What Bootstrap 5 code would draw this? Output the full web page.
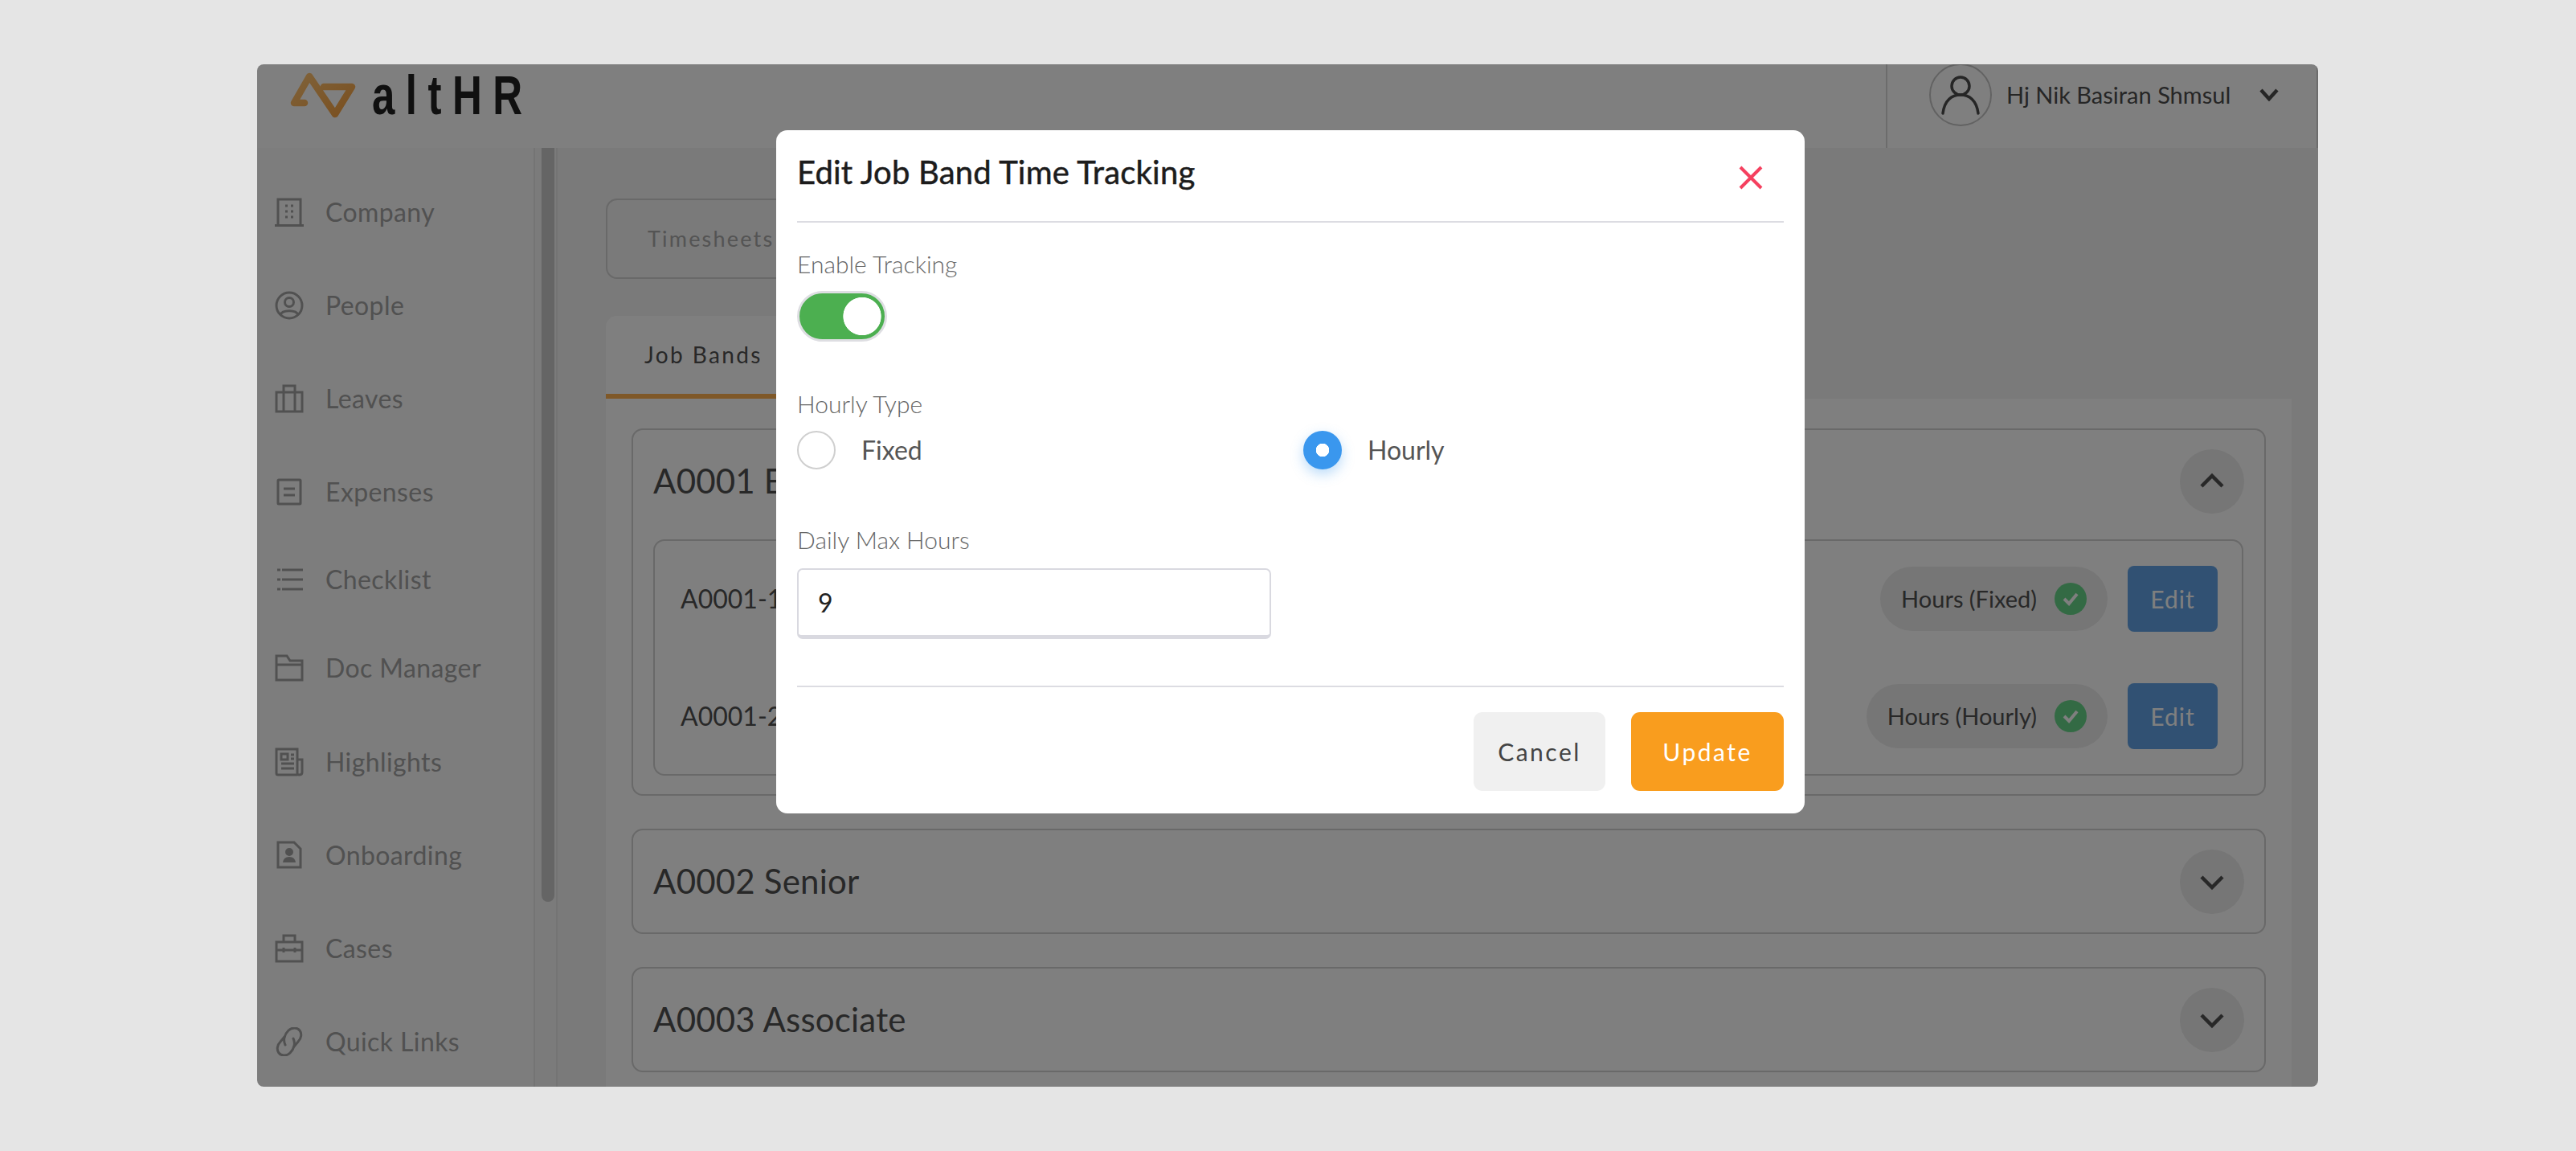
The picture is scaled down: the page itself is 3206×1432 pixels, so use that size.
<!DOCTYPE html>
<html lang="en">
<head>
  <meta charset="UTF-8">
  <title>altHR - Edit Job Band Time Tracking</title>
  <link href="https://cdn.jsdelivr.net/npm/bootstrap@5.3.0/dist/css/bootstrap.min.css" rel="stylesheet" />
  <style>
    body {
      margin: 0;
      background-color: #e5e5e5;
      font-family: Lato, "Noto Sans", sans-serif;
      color: #505050;
    }
    .app-window {
      position: relative;
      margin: 80px 0 0 320px;
      width: 2565px;
      height: 1272px;
      border-radius: 8px;
      overflow: hidden;
      background-color: #f4f4f4;
    }

    /* top bar */
    .top-bar {
      height: 104px;
      background-color: #ffffff;
      flex: none;
    }
    .logo-word {
      font-family: "Liberation Sans", sans-serif;
      font-weight: 700;
      font-size: 68px;
      line-height: 56px;
      letter-spacing: 18px;
      color: #202020;
      margin-left: 19px;
      transform: scaleX(.75);
      transform-origin: left;
    }
    .logo-box {
      padding: 10px 0 0 40px;
      align-self: flex-start;
    }
    .user-box {
      width: 538px;
      padding-left: 52px;
      border-left: 2px solid #d8d8d8;
      border-right: 2px solid #d8d8d8;
    }
    .avatar-ring {
      width: 78px;
      height: 78px;
      border: 2px solid #c4c4c4;
      border-radius: 50%;
      margin-top: -1px;
      flex: none;
    }
    .user-name {
      font-size: 29px;
      line-height: 36px;
      margin: 0 0 0 18px;
      color: #4c4c4c;
    }
    .user-top {
      height: 76px;
    }
    .user-caret {
      margin-left: 36px;
    }

    /* side menu */
    .side-menu {
      width: 346px;
      padding-top: 22px;
      background-color: #fbfbfb;
      border-right: 2px solid #e8e8e8;
      flex: none;
    }
    .side-item {
      display: flex;
      align-items: center;
      height: 116px;
      padding-left: 22px;
      color: #a2a2a2;
      font-size: 32px;
      letter-spacing: .4px;
      text-decoration: none;
    }
    .side-item svg {
      width: 36px;
      height: 36px;
      margin-right: 27px;
      flex: none;
    }
    .side-short { height: 102px; }
    .side-tall { height: 118px; }
    .scroll-track {
      width: 28px;
      padding: 0 2px 0 8px;
      border-right: 2px solid #e8e8e8;
      background-color: #f6f6f6;
      flex: none;
    }
    .scroll-thumb {
      height: 938px;
      background-color: #cacaca;
      border-radius: 0 0 10px 10px;
    }

    /* main area */
    .main-area {
      width: 2158px;
      padding: 63px 0 0 60px;
      flex: none;
    }
    .sheet-tab {
      width: 520px;
      height: 100px;
      padding-left: 50px;
      border: 2px solid #d2d2d2;
      border-radius: 14px;
      color: #a8a8a8;
      font-size: 27px;
      letter-spacing: 2.2px;
    }
    .band-tab {
      width: 360px;
      height: 103px;
      margin-top: 46px;
      padding: 0 0 2px 48px;
      background-color: #ffffff;
      border-bottom: 6px solid #ffb050;
      border-radius: 14px 14px 0 0;
      font-size: 28px;
      letter-spacing: 2.4px;
      color: #505050;
    }
    .band-panel {
      background-color: #ffffff;
      padding: 37px 32px 0 32px;
      height: 900px;
    }
    .band-box {
      border: 2px solid #d2d2d2;
      border-radius: 14px;
      background-color: transparent;
      margin-bottom: 41px;
      color: #505050;
    }
    .band-head {
      height: 127px;
      padding: 0 25px 0 25px;
    }
    .band-title {
      font-size: 42px;
      letter-spacing: .2px;
    }
    .round-btn {
      width: 80px;
      height: 80px;
      padding: 0;
      border: 0;
      border-radius: 50%;
      background-color: #ececec;
    }
    .round-btn svg { width: 30px; height: 30px; }
    .sub-box {
      margin: 9px 26px 23px 25px;
      height: 294px;
      padding: 31px 30px 0 32px;
      border: 2px solid #d2d2d2;
      border-radius: 14px;
    }
    .sub-row {
      height: 82px;
      margin-bottom: 64px;
      font-size: 32px;
    }
    .type-pill {
      height: 80px;
      padding: 0 26px;
      border-radius: 40px;
      background-color: #ececec;
      font-size: 29px;
      margin-right: 25px;
    }
    .check-dot {
      width: 40px;
      height: 40px;
      margin-left: 22px;
      border-radius: 50%;
      background-color: #67d589;
    }
    .check-dot svg { width: 24px; height: 24px; }
    .edit-btn {
      width: 112px;
      height: 82px;
      border: 0;
      border-radius: 8px;
      background-color: #62a3e6;
      color: #fff;
      font-size: 30px;
      letter-spacing: 1px;
    }
    .right-strip {
      width: 33px;
      background-color: #f4f4f4;
    }

    /* modal */
    .dim-layer {
      position: absolute;
      inset: 0;
      background-color: rgba(0, 0, 0, .5);
      padding: 82px 0 0 646px;
    }
    .edit-modal {
      width: 1280px;
      height: 850px;
      background-color: #fff;
      border: 0;
      border-radius: 14px;
      color: #222;
    }
    .edit-modal .modal-header {
      display: flex;
      justify-content: space-between;
      height: 115px;
      padding: 0;
      margin: 0 26px;
      border-bottom: 2px solid #dcdce2;
      align-items: flex-start;
    }
    .modal-heading {
      font-size: 40px;
      font-weight: 400;
      -webkit-text-stroke: .5px #1c1c1c;
      letter-spacing: .2px;
      line-height: 50px;
      margin: 27px 0 0 0;
      color: #1c1c1c;
    }
    .close-x {
      width: 34px;
      height: 34px;
      padding: 0;
      margin: 42px 24px 0 0;
      border: 0;
      background: none;
    }
    .edit-modal .modal-body {
      padding: 0 26px;
      flex: none;
      height: 576px;
    }
    .field-label {
      display: block;
      margin: 0;
      font-size: 30px;
      font-weight: 300;
      line-height: 38px;
      color: #666;
    }
    .form-switch.track-switch {
      padding: 0;
      margin: 15px 0 0 0;
      min-height: 0;
      height: 64px;
    }
    .form-switch .track-input {
      float: none;
      display: block;
      width: 112px;
      height: 63px;
      margin: 0;
      border: 3px solid #dedee2;
      border-radius: 32px;
      background-color: #4caf50;
      background-image: radial-gradient(circle 24px at 78px center, #fff 97%, transparent 100%);
      background-size: auto;
      background-position: 0 0;
    }
    .form-switch .track-input:focus,
    .form-switch .track-input:checked {
      background-color: #4caf50;
      background-image: radial-gradient(circle 24px at 78px center, #fff 97%, transparent 100%);
      background-position: 0 0;
      border-color: #dedee2;
      box-shadow: none;
    }
    .type-row {
      --bs-gutter-x: 32px;
      margin-top: 15px;
    }
    .type-check {
      display: flex;
      align-items: center;
      min-height: 0;
      margin: 0;
      padding: 0;
    }
    .type-check .form-check-input {
      float: none;
      width: 48px;
      height: 48px;
      margin: 0 32px 0 0;
      border: 2px solid #cfcfcf;
      background-color: #fff;
    }
    .type-check .form-check-input:checked {
      border: 0;
      background-color: #3a97ee;
      background-image: radial-gradient(circle 8.5px at center, #fff 95%, transparent 100%);
      box-shadow: 0 6px 16px rgba(58, 151, 238, .35);
    }
    .type-check .form-check-label {
      font-size: 32px;
      line-height: 40px;
      color: #555;
    }
    .hours-input {
      width: 590px;
      height: 88px;
      margin-top: 17px;
      padding: 0 24px;
      border: 2px solid #d9d9e0;
      border-bottom-width: 5px;
      border-radius: 7px;
      font-size: 32px;
      color: #222;
      font-family: inherit;
    }
    .edit-modal .modal-footer {
      margin: 0 26px;
      padding: 31px 0 0 0;
      border-top: 2px solid #dcdce2;
      gap: 32px;
      display: flex;
      justify-content: flex-end;
      align-items: flex-start;
    }
    .edit-modal .modal-footer > * { margin: 0; }
    .cancel-btn,
    .update-btn {
      height: 98px;
      border: 0;
      border-radius: 11px;
      font-size: 30px;
      letter-spacing: 2.5px;
    }
    .cancel-btn {
      width: 164px;
      background-color: #f0f0f0;
      color: #444;
    }
    .update-btn {
      width: 190px;
      background-color: #f99d1e;
      color: #fff;
    }
  </style>
</head>
<body>
  <div class="app-window d-flex flex-column">
    <div class="top-bar d-flex justify-content-between">
      <div class="logo-box d-flex align-items-start">
        <svg width="84" height="58" viewBox="360 90 84 58" fill="none">
          <defs>
            <linearGradient id="logoFade" x1="0" y1="0" x2="1" y2="1">
              <stop offset="0" stop-color="#ffc473" />
              <stop offset="1" stop-color="#f5a040" />
            </linearGradient>
          </defs>
          <path d="M379 128 H366 L385 95 L417 142 L438 108 H403" stroke="url(#logoFade)" stroke-width="8.5" stroke-linejoin="round" stroke-linecap="round" />
        </svg>
        <span class="logo-word">altHR</span>
      </div>
      <div class="user-box">
        <div class="user-top d-flex align-items-center">
          <div class="avatar-ring d-flex align-items-center justify-content-center">
            <svg width="54" height="54" viewBox="0 0 54 54" fill="none" stroke="#4c4c4c" stroke-width="3.5" stroke-linecap="round">
              <circle cx="27" cy="16" r="11" />
              <path d="M5 50 C7 34 16 27 27 27 C38 27 47 34 49 50" />
            </svg>
          </div>
          <span class="user-name">Hj Nik Basiran Shmsul</span>
          <svg class="user-caret" width="24" height="16" viewBox="0 0 24 16" fill="none" stroke="#4c4c4c" stroke-width="4.5"><path d="M2 2 L12 13 L22 2" /></svg>
        </div>
      </div>
    </div>

    <div class="d-flex flex-grow-1">
      <nav class="side-menu">
        <a class="side-item" href="#">
          <svg viewBox="0 0 36 36" fill="none" stroke="#a2a2a2" stroke-width="3"><path d="M0 34.5 H36 M4 34 V2 H32 V34" /><path d="M13 10h3M20 10h3M13 17h3M20 17h3M13 24h3M20 24h3" /></svg>Company</a>
        <a class="side-item" href="#">
          <svg viewBox="0 0 36 36" fill="none" stroke="#a2a2a2" stroke-width="3"><circle cx="18" cy="18" r="16" /><circle cx="18" cy="14" r="5.5" /><path d="M7 30 C9 23 27 23 29 30" /></svg>People</a>
        <a class="side-item" href="#">
          <svg viewBox="0 0 36 36" fill="none" stroke="#a2a2a2" stroke-width="3"><rect x="2" y="10" width="32" height="24" /><path d="M11 10 V2 H25 V10 M11 10 V34 M25 10 V34" /></svg>Leaves</a>
        <a class="side-item" href="#">
          <svg viewBox="0 0 36 36" fill="none" stroke="#a2a2a2" stroke-width="3"><rect x="4" y="3" width="28" height="30" rx="1" /><path d="M11 14 H25 M11 22 H25" /></svg>Expenses</a>
        <a class="side-item side-short" href="#">
          <svg viewBox="0 0 36 36" fill="none" stroke="#a2a2a2" stroke-width="3"><path d="M9 6 H35 M9 18 H35 M9 30 H35 M3 6 H7 M3 18 H7 M3 30 H7" /></svg>Checklist</a>
        <a class="side-item side-tall" href="#">
          <svg viewBox="0 0 36 36" fill="none" stroke="#a2a2a2" stroke-width="3"><path d="M2 33 V3 H15 L19 9 H34 V33 Z M2 14 H34" /></svg>Doc Manager</a>
        <a class="side-item" href="#">
          <svg viewBox="0 0 36 36" fill="none" stroke="#a2a2a2" stroke-width="3"><path d="M28 34 H4 Q2 34 2 32 V2 H28 V32 Q28 34 30 34 Q34 34 34 31 V15 H28" /><rect x="8" y="8" width="8" height="7" /><path d="M20 9 H24 M20 14 H24 M8 20 H24 M8 26 H24" /></svg>Highlights</a>
        <a class="side-item" href="#">
          <svg viewBox="0 0 36 36" fill="none" stroke="#a2a2a2" stroke-width="3"><path d="M4 33 V2 H24 L32 10 V33 Z" /><circle cx="18" cy="14" r="3.5" fill="#a2a2a2" /><path d="M10 27 Q11 20 18 20 Q25 20 26 27 Z" fill="#a2a2a2" stroke="none" /></svg>Onboarding</a>
        <a class="side-item" href="#">
          <svg viewBox="0 0 36 36" fill="none" stroke="#a2a2a2" stroke-width="3"><rect x="2" y="10" width="32" height="24" /><path d="M11 10 V2 H25 V10 M2 20 H34 M11 17 V23 M25 17 V23" /></svg>Cases</a>
        <a class="side-item" href="#">
          <svg viewBox="0 0 36 36" fill="none" stroke="#a2a2a2" stroke-width="3" stroke-linecap="round"><path d="M13 22 C10 16 12 9 17 4 C21 0 28 0 31 4 C34 8 33 14 29 18 L24 24" /><path d="M23 14 C26 20 24 27 19 32 C15 36 8 36 5 32 C2 28 3 22 7 18 L12 12" /></svg>Quick Links</a>
      </nav>
      <div class="scroll-track"><div class="scroll-thumb"></div></div>

      <main class="main-area">
        <div class="sheet-tab d-flex align-items-center">Timesheets</div>
        <div class="band-tab d-flex align-items-center">Job Bands</div>
        <div class="band-panel">
          <div class="card band-box">
            <div class="band-head d-flex justify-content-between align-items-center">
              <span class="band-title">A0001 Executive</span>
              <button class="round-btn d-flex align-items-center justify-content-center" type="button">
                <svg viewBox="0 0 30 30" fill="none" stroke="#505050" stroke-width="4.5"><path d="M2 21 L15 8 L28 21" /></svg>
              </button>
            </div>
            <div class="sub-box">
              <div class="sub-row d-flex align-items-center">
                <span class="me-auto">A0001-1 Executive</span>
                <span class="type-pill d-flex align-items-center">Hours (Fixed)
                  <span class="check-dot d-flex align-items-center justify-content-center">
                    <svg viewBox="0 0 24 24" fill="none" stroke="#fff" stroke-width="4"><path d="M4 12 L10 18 L20 6" /></svg>
                  </span>
                </span>
                <button class="edit-btn" type="button">Edit</button>
              </div>
              <div class="sub-row d-flex align-items-center">
                <span class="me-auto">A0001-2 Executive</span>
                <span class="type-pill d-flex align-items-center">Hours (Hourly)
                  <span class="check-dot d-flex align-items-center justify-content-center">
                    <svg viewBox="0 0 24 24" fill="none" stroke="#fff" stroke-width="4"><path d="M4 12 L10 18 L20 6" /></svg>
                  </span>
                </span>
                <button class="edit-btn" type="button">Edit</button>
              </div>
            </div>
          </div>
          <div class="card band-box">
            <div class="band-head d-flex justify-content-between align-items-center">
              <span class="band-title">A0002 Senior</span>
              <button class="round-btn d-flex align-items-center justify-content-center" type="button">
                <svg viewBox="0 0 30 30" fill="none" stroke="#505050" stroke-width="4.5"><path d="M2 9 L15 22 L28 9" /></svg>
              </button>
            </div>
          </div>
          <div class="card band-box">
            <div class="band-head d-flex justify-content-between align-items-center">
              <span class="band-title">A0003 Associate</span>
              <button class="round-btn d-flex align-items-center justify-content-center" type="button">
                <svg viewBox="0 0 30 30" fill="none" stroke="#505050" stroke-width="4.5"><path d="M2 9 L15 22 L28 9" /></svg>
              </button>
            </div>
          </div>
        </div>
      </main>
      <div class="right-strip"></div>
    </div>

    <div class="dim-layer">
      <div class="modal-content edit-modal">
        <div class="modal-header">
          <h5 class="modal-heading">Edit Job Band Time Tracking</h5>
          <button class="close-x" type="button" aria-label="Close">
            <svg width="34" height="34" viewBox="0 0 34 34" fill="none" stroke="#f5405f" stroke-width="4"><path d="M4 4 L30 30 M30 4 L4 30" /></svg>
          </button>
        </div>
        <div class="modal-body">
          <label class="field-label" style="margin-top:32px" for="trackToggle">Enable Tracking</label>
          <div class="form-check form-switch track-switch">
            <input class="form-check-input track-input" type="checkbox" role="switch" id="trackToggle" checked>
          </div>
          <label class="field-label" style="margin-top:57px">Hourly Type</label>
          <div class="row type-row">
            <div class="col-6">
              <div class="form-check type-check">
                <input class="form-check-input" type="radio" name="hourlyType" id="typeFixed">
                <label class="form-check-label" for="typeFixed">Fixed</label>
              </div>
            </div>
            <div class="col-6">
              <div class="form-check type-check">
                <input class="form-check-input" type="radio" name="hourlyType" id="typeHourly" checked>
                <label class="form-check-label" for="typeHourly">Hourly</label>
              </div>
            </div>
          </div>
          <label class="field-label" style="margin-top:68px" for="maxHours">Daily Max Hours</label>
          <input class="form-control hours-input" id="maxHours" value="9">
        </div>
        <div class="modal-footer">
          <button class="btn cancel-btn" type="button">Cancel</button>
          <button class="btn update-btn" type="button">Update</button>
        </div>
      </div>
    </div>
  </div>

  <script src="https://cdn.jsdelivr.net/npm/bootstrap@5.3.0/dist/js/bootstrap.bundle.min.js"></script>
</body>
</html>
